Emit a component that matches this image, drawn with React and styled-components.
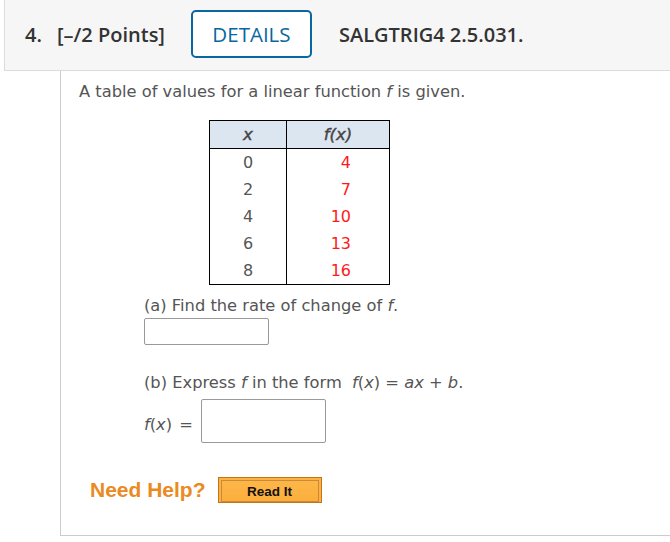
import React, { useState } from 'react';
import styled, { createGlobalStyle } from 'styled-components';

const GlobalStyle = createGlobalStyle`
    body {
        margin: 0;
        background: #ffffff;
        font-family: "DejaVu Sans", Verdana, sans-serif;
    }
`;

const Page = styled.div`
    width: 670px;
    height: 542px;
    overflow: hidden;
`;

const QuestionHeader = styled.div`
    margin-left: 4px;
    height: 71px;
    background: #f6f6f6;
    border-left: 1px solid #dcdcdc;
    border-bottom: 1px solid #dcdcdc;
    display: flex;
    align-items: center;
    padding: 0 0 2px 20px;
    box-sizing: border-box;
    font-family: "Open Sans", sans-serif;
    font-weight: 600;
    font-size: 20px;
    color: #333333;
`;

const Number = styled.span`
    margin-right: 15px;
`;

const DetailsButton = styled.button`
    margin-left: 26px;
    width: 121px;
    height: 48px;
    flex-shrink: 0;
    border: 2px solid #0a66a0;
    border-radius: 5px;
    background: #ffffff;
    color: #0a66a0;
    font-family: "Open Sans", sans-serif;
    font-size: 20.5px;
    font-weight: 500;
    cursor: pointer;
`;

const Code = styled.span`
    margin-left: 27px;
`;

const QuestionBody = styled.div`
    margin-left: 60px;
    height: 465px;
    border-left: 1px solid #cccccc;
    border-bottom: 1px solid #cccccc;
    padding: 10px 0 0 18px;
    box-sizing: border-box;
    color: #555555;
    font-size: 16.3px;
`;

const Intro = styled.div`
    line-height: 22px;
`;

const Parts = styled.div`
    padding-left: 65px;
`;

const ValueTable = styled.table`
    margin: 17px 0 0 130px;
    border-collapse: collapse;
    border: 1px solid #000;
    font-size: 16px;
`;

const HeadCell = styled.th`
    background: #dce6f1;
    height: 27px;
    width: ${(p) => p.$w}px;
    border: 1px solid #000;
    font-style: italic;
    font-weight: normal;
    font-size: 16.5px;
    color: #444;
    padding: 0;
    -webkit-text-stroke: 0.4px #444;
`;

const Cell = styled.td`
    height: 27px;
    padding: 0 ${(p) => (p.$red ? '38px' : '0')} 0 0;
    text-align: ${(p) => (p.$red ? 'right' : 'center')};
    color: ${(p) => (p.$red ? '#ff1a1a' : '#555')};
    border-left: 1px solid #000;
    line-height: 27px;
`;

const PartText = styled.div`
    margin-top: ${(p) => p.$top}px;
    line-height: 22px;
`;

const AnswerBox = styled.input`
    display: block;
    box-sizing: border-box;
    width: ${(p) => p.$w}px;
    height: ${(p) => p.$h}px;
    margin-top: ${(p) => p.$top || 0}px;
    border: 1px solid #999999;
    border-radius: 2px;
    padding: 0 4px;
    font-size: 15px;
`;

const AnswerRow = styled.div`
    display: flex;
    align-items: center;
    margin-top: 5px;
    gap: 8px;
`;

const Label = styled.span`
    padding-top: 6px;
    word-spacing: 2px;
`;

const Help = styled.div`
    display: flex;
    align-items: center;
    margin: 34px 0 0 11px;
`;

const HelpTitle = styled.span`
    font-family: "Liberation Sans", Arial, sans-serif;
    font-weight: bold;
    font-size: 21px;
    color: #ea8a1f;
`;

const ReadIt = styled.button`
    margin-left: 12px;
    width: 104px;
    height: 26px;
    padding: 2px;
    border: 1px solid #c27419;
    background: #fdb143;
    cursor: pointer;
    box-sizing: border-box;
`;

const ReadItInner = styled.span`
    display: flex;
    align-items: center;
    justify-content: center;
    height: 100%;
    border: 1px solid #c98a3a;
    background: linear-gradient(#fdb748, #fcae3c);
    font-family: "Liberation Sans", Arial, sans-serif;
    font-weight: bold;
    font-size: 13.5px;
    color: #111;
`;

const rows = [
    [0, 4],
    [2, 7],
    [4, 10],
    [6, 13],
    [8, 16],
];

export default function App() {
    const [rate, setRate] = useState('');
    const [expr, setExpr] = useState('');

    return (
        <Page>
            <GlobalStyle />
            <QuestionHeader>
                <Number>4.</Number>
                <span>[–/2 Points]</span>
                <DetailsButton>DETAILS</DetailsButton>
                <Code>SALGTRIG4 2.5.031.</Code>
            </QuestionHeader>

            <QuestionBody>
                <Intro>
                    A table of values for a linear function <i>f</i> is given.
                </Intro>

                <ValueTable>
                    <thead>
                        <tr>
                            <HeadCell $w={76}>x</HeadCell>
                            <HeadCell $w={102}>f(x)</HeadCell>
                        </tr>
                    </thead>
                    <tbody>
                        {rows.map(([x, y]) => (
                            <tr key={x}>
                                <Cell>{x}</Cell>
                                <Cell $red>{y}</Cell>
                            </tr>
                        ))}
                    </tbody>
                </ValueTable>

                <Parts>
                    <PartText $top={10}>
                        (a) Find the rate of change of <i>f</i>.
                    </PartText>
                    <AnswerBox
                        $w={125}
                        $h={27}
                        $top={1}
                        value={rate}
                        onChange={(e) => setRate(e.target.value)}
                    />

                    <PartText $top={27}>
                        (b) Express <i>f</i> in the form&nbsp; <i>f</i>(<i>x</i>) = <i>ax</i> + <i>b</i>.
                    </PartText>
                    <AnswerRow>
                        <Label>
                            <i>f</i>(<i>x</i>) =
                        </Label>
                        <AnswerBox
                            $w={125}
                            $h={44}
                            value={expr}
                            onChange={(e) => setExpr(e.target.value)}
                        />
                    </AnswerRow>
                </Parts>

                <Help>
                    <HelpTitle>Need Help?</HelpTitle>
                    <ReadIt>
                        <ReadItInner>Read It</ReadItInner>
                    </ReadIt>
                </Help>
            </QuestionBody>
        </Page>
    );
}
